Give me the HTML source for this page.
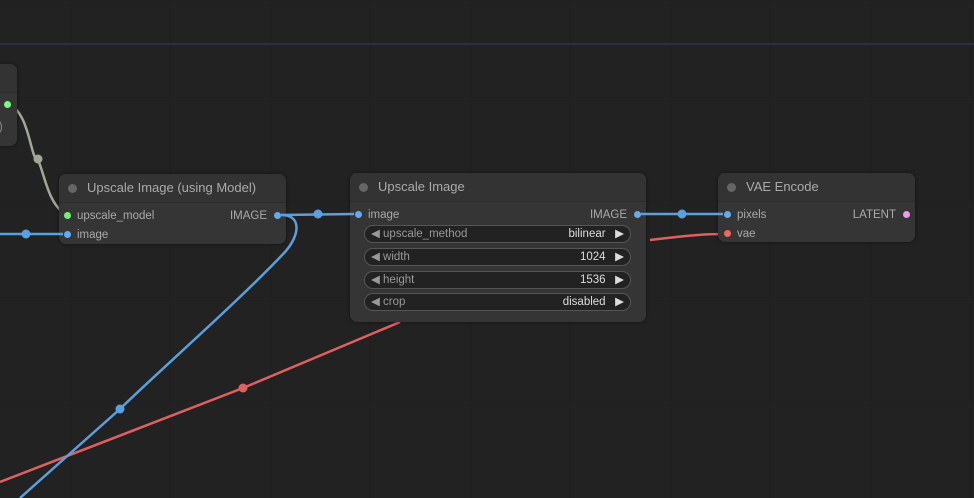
<!DOCTYPE html>
<html><head><style>
body{margin:0;width:974px;height:498px;overflow:hidden;background:#222;font-family:"Liberation Sans",sans-serif;position:relative}
.grid{position:absolute;inset:0;background-image:linear-gradient(#1f1f1f 1px,transparent 1px),linear-gradient(90deg,#1f1f1f 1px,transparent 1px);background-size:100px 100px;background-position:-30px 0}
.node{position:absolute;background:#353535;border-radius:7px;box-shadow:0 0 3px #0008}
.title{height:28px;border-bottom:1px solid #2c2c2c;background:#333;border-radius:7px 7px 0 0;color:#aaa;font-size:13px;line-height:28px;padding-left:28px;position:relative}
.title:before{content:"";position:absolute;left:9px;top:10px;width:9px;height:9px;border-radius:50%;background:#666}
.row{position:absolute;font-size:11.5px;color:#aaa;line-height:12px}
.dot{position:absolute;width:7px;height:7px;border-radius:50%}
.w{position:absolute;left:14px;right:15px;height:16px;border:1px solid #555;border-radius:9px;background:#222;font-size:11.5px;color:#999;line-height:16px}
.w .l{position:absolute;left:6px}
.w .v{position:absolute;right:6px;color:#ddd}
svg{position:absolute;left:0;top:0}
</style></head><body>
<div class="grid"></div>
<div style="position:absolute;left:0;right:0;top:43px;height:2px;background:#2b2f3f"></div>
<svg width="974" height="498">
<path d="M7 104 C30 110,30 160,38 160 C45 175,48 205,67 215" stroke="#a0a894" stroke-width="2.5" fill="none"/>
<circle cx="38" cy="159" r="4.5" fill="#a0a894"/>
<path d="M650 240 C700 234,710 234,727 234" stroke="#e06060" stroke-width="2.5" fill="none"/>
<path d="M400 322 L243 388 L0 482" stroke="#e06060" stroke-width="2.5" fill="none"/>
<circle cx="243" cy="388" r="4.5" fill="#e06060"/>
</svg>
<div class="node" style="left:-10px;top:64px;width:27px;height:82px"><div style="height:28px;border-bottom:1px solid #2c2c2c;background:#333;border-radius:7px 7px 0 0"></div>
<div style="position:absolute;left:0;top:55px;width:10px;height:14px;border:1px solid #888;border-radius:50%"></div></div>
<div class="dot" style="left:4px;top:101px;background:#7f7"></div>
<div class="node" style="left:59px;top:174px;width:227px;height:70px">
<div class="title">Upscale Image (using Model)</div>
<div class="dot" style="left:5px;top:38px;background:#7e7"></div><div class="row" style="left:18px;top:36px">upscale_model</div>
<div class="dot" style="left:5px;top:57px;background:#6ae"></div><div class="row" style="left:18px;top:55px">image</div>
<div class="row" style="right:19px;top:36px">IMAGE</div><div class="dot" style="right:5px;top:38px;background:#6ae"></div>
</div>
<div class="node" style="left:350px;top:173px;width:296px;height:149px">
<div class="title">Upscale Image</div>
<div class="dot" style="left:5px;top:38px;background:#6ae"></div><div class="row" style="left:18px;top:36px">image</div>
<div class="row" style="right:19px;top:36px">IMAGE</div><div class="dot" style="right:5px;top:38px;background:#6ae"></div>
<div class="w" style="top:52px"><span class="l">◀ upscale_method</span><span class="v">bilinear &nbsp;&nbsp;▶</span></div>
<div class="w" style="top:75px"><span class="l">◀ width</span><span class="v">1024 &nbsp;&nbsp;▶</span></div>
<div class="w" style="top:98px"><span class="l">◀ height</span><span class="v">1536 &nbsp;&nbsp;▶</span></div>
<div class="w" style="top:120px"><span class="l">◀ crop</span><span class="v">disabled &nbsp;&nbsp;▶</span></div>
</div>
<div class="node" style="left:718px;top:173px;width:197px;height:69px">
<div class="title">VAE Encode</div>
<div class="dot" style="left:6px;top:38px;background:#6ae"></div><div class="row" style="left:19px;top:36px">pixels</div>
<div class="dot" style="left:6px;top:57px;background:#e66"></div><div class="row" style="left:19px;top:55px">vae</div>
<div class="row" style="right:19px;top:36px">LATENT</div><div class="dot" style="right:5px;top:38px;background:#e9e"></div>
</div>
<svg width="974" height="498">
<path d="M0 234 L63 234" stroke="#5aa0e0" stroke-width="2.5" fill="none"/>
<circle cx="26" cy="234" r="4.5" fill="#5aa0e0"/>
<path d="M281 215 L354 214" stroke="#5aa0e0" stroke-width="2.5" fill="none"/>
<circle cx="318" cy="214" r="4.5" fill="#5aa0e0"/>
<path d="M641 214 L723 214" stroke="#5aa0e0" stroke-width="2.5" fill="none"/>
<circle cx="682" cy="214" r="4.5" fill="#5aa0e0"/>
<path d="M281 215 C302 215,300 235,285 252 C240 300,160 370,120 409 L20 498" stroke="#5aa0e0" stroke-width="2.5" fill="none"/>
<circle cx="120" cy="409" r="4.5" fill="#5aa0e0"/>
</svg>
</body></html>
